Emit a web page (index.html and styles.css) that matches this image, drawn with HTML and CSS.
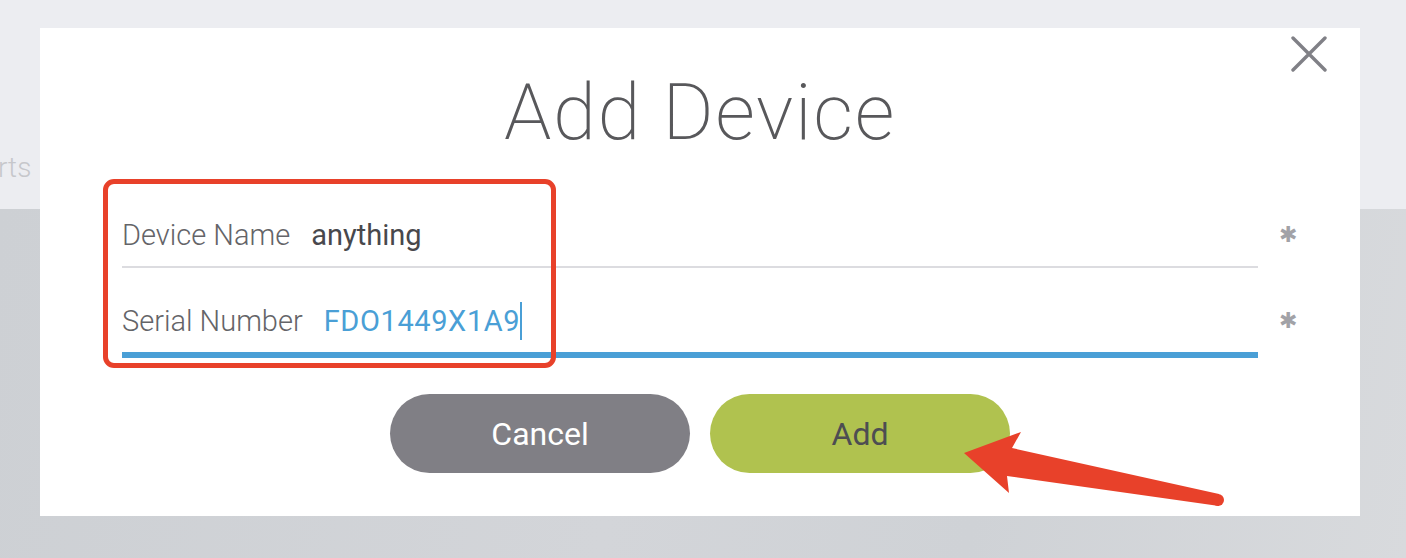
FILE: index.html
```html
<!DOCTYPE html>
<html lang="en">
<head>
<meta charset="utf-8">
<title>Add Device</title>
<link rel="stylesheet" href="styles.css">
</head>
<body>
<div class="page">
  <header class="topbar"><span class="nav-tail">rts</span></header>
  <div class="backdrop"></div>
</div>

<div class="modal">
  <button class="close" type="button" aria-label="Close">
    <svg viewBox="0 0 36 36" width="36" height="36"><path d="M2 2 L34 34 M34 2 L2 34" fill="none" stroke="#808086" stroke-width="3.4" stroke-linecap="round"/></svg>
  </button>
  <h1 class="title">Add Device</h1>
  <form class="form">
    <div class="row row--first">
      <div class="field">
        <span class="label">Device Name</span><span class="value">anything</span>
      </div>
      <span class="req">✱</span>
    </div>
    <div class="row row--second">
      <div class="field field--active">
        <span class="label">Serial Number</span><span class="value value--blue">FDO1449X1A9</span><span class="caret"></span>
      </div>
      <span class="req">✱</span>
    </div>
    <div class="actions">
      <button class="btn btn--cancel" type="button">Cancel</button>
      <button class="btn btn--add" type="button">Add</button>
    </div>
  </form>
</div>

<div class="highlight"></div>
<svg class="arrow" viewBox="955 425 275 90" width="275" height="90">
  <polygon points="964,453 1021,432 1012,448 1219,494 1219,506 1007,476 1009,493" fill="#e8412a"/>
  <circle cx="1218" cy="500" r="6" fill="#e8412a"/>
</svg>
</body>
</html>
```

FILE: styles.css
```css
* { box-sizing: border-box; }

html, body {
  margin: 0;
  padding: 0;
}

body {
  width: 1406px;
  height: 558px;
  overflow: hidden;
  position: relative;
  font-family: Roboto, "Liberation Sans", Arial, sans-serif;
  background: #ecedf1;
}

.page {
  display: flex;
  flex-direction: column;
  height: 558px;
}

.topbar {
  height: 209px;
  background: #ecedf1;
  display: flex;
  align-items: flex-end;
  padding-bottom: 25px;
}

.nav-tail {
  font-size: 28px;
  font-weight: 300;
  color: #c6c7cb;
  line-height: 32px;
  margin-left: -2px;
}

.backdrop {
  flex: 1;
  background: linear-gradient(100deg, #cdd0d4 0%, #d3d5d9 45%, #cfd2d6 70%, #d8dadd 100%);
}

.modal {
  position: absolute;
  left: 40px;
  top: 28px;
  width: 1320px;
  height: 488px;
  background: #ffffff;
  padding-top: 35px;
}

.close {
  position: absolute;
  left: 1251px;
  top: 8px;
  width: 36px;
  height: 36px;
  padding: 0;
  border: 0;
  background: none;
  display: flex;
}

.title {
  margin: 0;
  text-align: center;
  font-size: 78px;
  line-height: 100px;
  font-weight: 200;
  color: #58585b;
  letter-spacing: 1.6px;
}

.form {
  margin: 0 0 0 82px;
  display: flex;
  flex-direction: column;
}

.row {
  display: grid;
  grid-template-columns: 1136px auto;
  column-gap: 21px;
  align-items: start;
}

.row--first { padding-top: 52px; }
.row--second { padding-top: 33px; }

.field {
  display: flex;
  align-items: center;
  height: 53px;
  padding-bottom: 11px;
  border-bottom: 2px solid #dcdce0;
  font-size: 29px;
  line-height: 40px;
}

.field--active {
  height: 57px;
  border-bottom: 6px solid #4a9fd6;
}

.label {
  font-weight: 300;
  color: #646468;
}

.value {
  margin-left: 21px;
  font-weight: 400;
  color: #48484c;
}

.value--blue {
  font-weight: 400;
  color: #4a9fd6;
  letter-spacing: 0.6px;
}

.caret {
  display: inline-block;
  width: 2px;
  height: 38px;
  margin-left: 0;
  background: #4a9fd6;
}

.req {
  font-family: "DejaVu Sans", sans-serif;
  font-size: 22px;
  line-height: 40px;
  color: #a2a2a7;
}

.actions {
  display: flex;
  justify-content: center;
  gap: 20px;
  margin-top: 36px;
  margin-left: -82px;
}

.btn {
  width: 300px;
  height: 79px;
  border: 0;
  border-radius: 40px;
  font-family: Roboto, "Liberation Sans", Arial, sans-serif;
  font-size: 32px;
  font-weight: 400;
  padding: 0;
}

.btn--cancel {
  background: #807f85;
  color: #ffffff;
}

.btn--add {
  background: #b0c24f;
  color: #4d4d52;
}

.highlight {
  position: absolute;
  left: 103px;
  top: 179px;
  width: 453px;
  height: 189px;
  border: 5px solid #e8412a;
  border-radius: 11px;
}

.arrow {
  position: absolute;
  left: 955px;
  top: 425px;
}
```
